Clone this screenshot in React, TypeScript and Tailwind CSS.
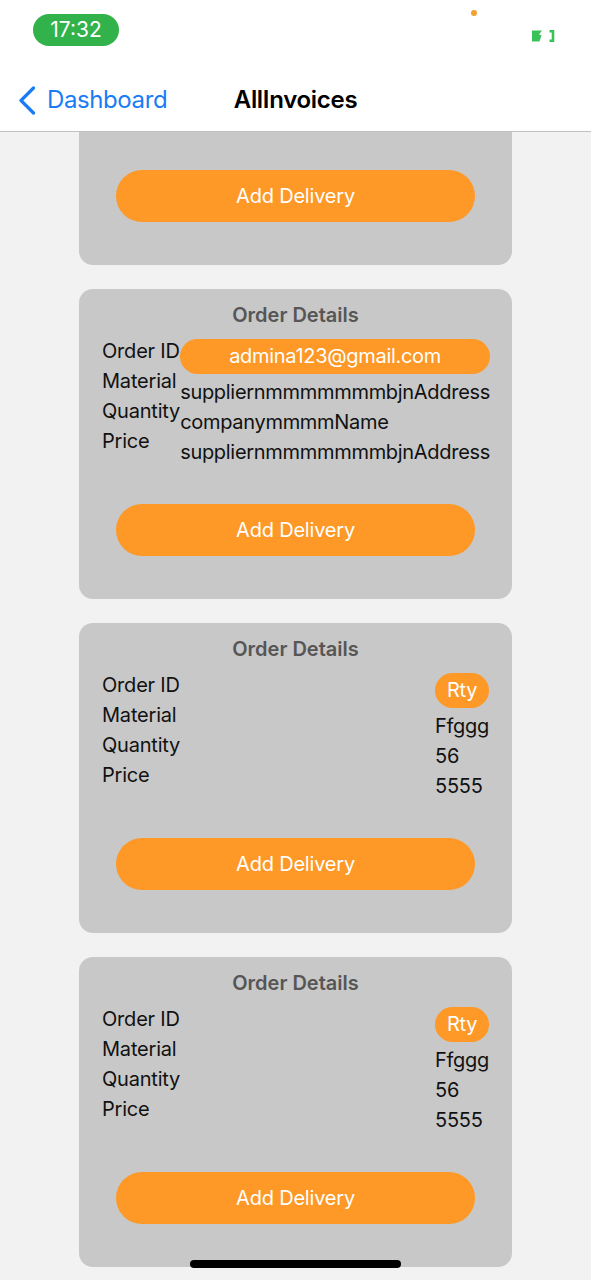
type Order = {
  tag: string;
  values: string[];
};

const orders: Order[] = [
  { tag: "Rty", values: ["Ffggg", "56", "5555"] },
  {
    tag: "admina123@gmail.com",
    values: [
      "suppliernmmmmmmmbjnAddress",
      "companymmmmName",
      "suppliernmmmmmmmbjnAddress",
    ],
  },
  { tag: "Rty", values: ["Ffggg", "56", "5555"] },
  { tag: "Rty", values: ["Ffggg", "56", "5555"] },
];

const labels = ["Order ID", "Material", "Quantity", "Price"];

// first card is scrolled up under the nav bar, only its button shows
function OrderCard({ order, first }: { order: Order; first?: boolean }) {
  return (
    <div
      className={`flex flex-col w-[433px] h-[310px] shrink-0 rounded-[14px] bg-[#c8c8c8] ${
        first ? "mt-[-177px]" : ""
      }`}
    >
      {!first && (
        <>
          <h3 className="pt-[14px] text-center text-[20px] leading-[24px] font-semibold text-[#565656]">
            Order Details
          </h3>
          <div className="mt-[9px] flex justify-between px-[23px] text-[20px] text-[#111]">
            <div className="flex flex-col shrink-0 whitespace-nowrap leading-[30px] tracking-[-0.2px]">
              {labels.map((l) => (
                <span key={l}>{l}</span>
              ))}
            </div>
            <div className="mt-[3px] flex flex-col shrink-0 whitespace-nowrap leading-[30px] tracking-[-0.3px]">
              <span className="mb-[3px] h-[35px] rounded-full bg-[#fe9826] px-[11px] text-center leading-[35px] text-white">
                {order.tag}
              </span>
              {order.values.map((v, i) => (
                <span key={i}>{v}</span>
              ))}
            </div>
          </div>
        </>
      )}
      <button className="mt-auto mb-[43px] self-center w-[359px] h-[52px] rounded-full bg-[#fe9826] text-[20px] tracking-[-0.2px] text-white">
        Add Delivery
      </button>
    </div>
  );
}

export default function App() {
  return (
    <div className="relative w-[591px] h-[1280px] overflow-hidden bg-[#f2f2f2] font-['Inter',sans-serif]">
      <header className="bg-white border-b border-[#c2c2c2]">
        <div className="relative flex h-[60px] items-start justify-between">
          <div className="ml-[33px] mt-[14px] flex h-[32px] w-[86px] items-center justify-center rounded-full bg-[#31b24b] text-[21px] text-white">
            17:32
          </div>
          <span className="absolute left-[471px] top-[10px] h-[6px] w-[6px] rounded-full bg-[#f5a030]" />
          <svg
            className="mr-[35px] mt-[30px]"
            width="24"
            height="12"
            viewBox="0 0 24 12"
          >
            <path d="M0 0.5h10l-3 4 2.5 0.8-2 6.2H0z" fill="#3ac25a" />
            <path
              d="M17.5 1.2h3.5v9.6h-3.5"
              fill="none"
              stroke="#3ac25a"
              strokeWidth="2.6"
            />
          </svg>
        </div>
        <div className="grid h-[71px] grid-cols-[1fr_auto_1fr] items-center pt-[9px]">
          <div className="flex items-center text-[#1a7cf5]">
            <svg
              className="ml-[18px]"
              width="18"
              height="29"
              viewBox="0 0 18 29"
            >
              <path
                d="M15.5 2L3 14.5 15.5 27"
                fill="none"
                stroke="currentColor"
                strokeWidth="3.2"
                strokeLinecap="round"
                strokeLinejoin="round"
              />
            </svg>
            <span className="ml-[11px] text-[24px] tracking-[-0.4px]">Dashboard</span>
          </div>
          <h1 className="text-[24px] font-semibold tracking-[-0.3px] text-black">
            AllInvoices
          </h1>
          <div />
        </div>
      </header>

      <main className="flex h-[1148px] flex-col items-center gap-[24px] overflow-hidden">
        {orders.map((o, i) => (
          <OrderCard key={i} order={o} first={i === 0} />
        ))}
      </main>

      <div className="absolute bottom-[12px] left-[190px] h-[8px] w-[211px] rounded-full bg-black" />
    </div>
  );
}
